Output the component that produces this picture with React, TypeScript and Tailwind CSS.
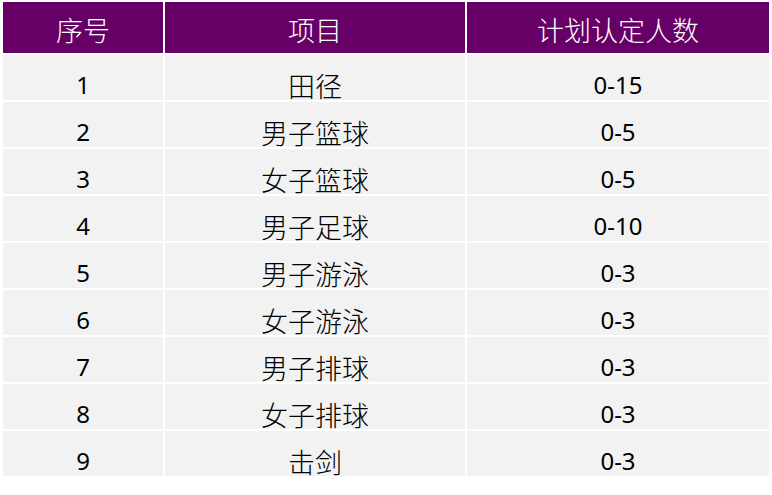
const ROWS = [
  ['1', '田径', '0-15'],
  ['2', '男子篮球', '0-5'],
  ['3', '女子篮球', '0-5'],
  ['4', '男子足球', '0-10'],
  ['5', '男子游泳', '0-3'],
  ['6', '女子游泳', '0-3'],
  ['7', '男子排球', '0-3'],
  ['8', '女子排球', '0-3'],
  ['9', '击剑', '0-3'],
];

const cjk = "font-['Noto_Sans_CJK_SC',sans-serif]";
const num = "font-['Noto_Sans','Noto_Sans_CJK_SC',sans-serif]";

export default function App() {
  return (
    <div className="w-[772px] h-[495px] bg-white pt-[2px] pl-[3px]">
      <div className="grid grid-cols-[160px_300px_302px] grid-rows-[51px_repeat(9,45px)] gap-[2px] w-[766px]">
        {/* header */}
        {['序号', '项目', '计划认定人数'].map(h => (
          <div key={h} className={`bg-[#660066] flex items-center justify-center pt-[4px] text-white text-[27px] leading-none font-light ${cjk}`}>
            {h}
          </div>
        ))}
        {ROWS.map(([no, name, count]) => (
          <div key={no} className="contents">
            <div className={`bg-[#f2f2f2] flex items-center justify-center pt-[15px] text-[24px] text-black ${num}`}>{no}</div>
            <div className={`bg-[#f2f2f2] flex items-center justify-center pt-[15px] text-[27px] leading-none text-black font-light ${cjk}`}>{name}</div>
            <div className={`bg-[#f2f2f2] flex items-center justify-center pt-[15px] text-[24px] text-black ${num}`}>{count}</div>
          </div>
        ))}
      </div>
    </div>
  );
}
